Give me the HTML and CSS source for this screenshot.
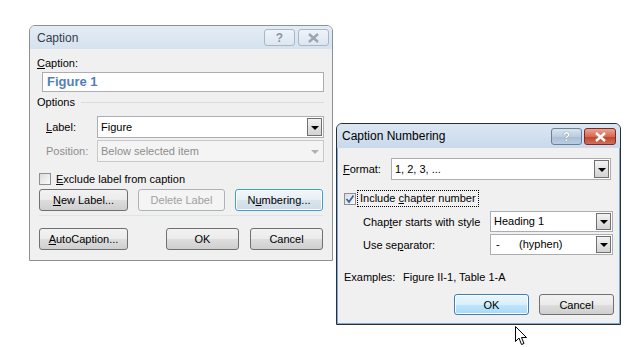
FILE: index.html
```html
<!DOCTYPE html>
<html lang="en">
<head>
    <meta charset="UTF-8">
    <title>Caption</title>
    <link rel="stylesheet" href="styles.css">
</head>
<body>
    <div class="dialog dlg-caption">
        <div class="titlebar">
            <span class="title">Caption</span>
            <div class="caps">
                <span class="cap help">?</span>
                <span class="cap close">
                    <svg width="13" height="10" viewBox="0 0 13 10"><path d="M2 1 L11 9 M11 1 L2 9" stroke="#9aa6b4" stroke-width="2.4" fill="none"/></svg>
                </span>
            </div>
        </div>
        <div class="body">
            <div class="field-label"><u>C</u>aption:</div>
            <div class="textbox">Figure 1</div>
            <div class="group-head"><span>Options</span><span class="rule"></span></div>
            <div class="row first">
                <span class="lbl"><u>L</u>abel:</span>
                <div class="combo wide">Figure<span class="drop"></span></div>
            </div>
            <div class="row">
                <span class="lbl disabled">Position:</span>
                <div class="combo wide off">Below selected item<span class="drop"></span></div>
            </div>
            <div class="check-row">
                <span class="checkbox"></span>
                <span><u>E</u>xclude label from caption</span>
            </div>
            <div class="btn-row">
                <span class="btn b-new"><u>N</u>ew Label...</span>
                <span class="btn b-del off">Delete Label</span>
                <span class="btn b-num focus">N<u>u</u>mbering...</span>
            </div>
            <div class="sep"></div>
            <div class="btn-row bottom">
                <span class="btn b-new"><u>A</u>utoCaption...</span>
                <span class="btn b-ok">OK</span>
                <span class="btn b-cancel">Cancel</span>
            </div>
        </div>
    </div>

    <div class="dialog dlg-numbering active">
        <div class="titlebar">
            <span class="title">Caption Numbering</span>
            <div class="caps">
                <span class="cap help">?</span>
                <span class="cap close">
                    <svg width="13" height="10" viewBox="0 0 13 10"><path d="M2 1 L11 9 M11 1 L2 9" stroke="#ffffff" stroke-width="2.4" fill="none"/></svg>
                </span>
            </div>
        </div>
        <div class="body">
            <div class="row">
                <span class="lbl"><u>F</u>ormat:</span>
                <div class="combo fmt">1, 2, 3, ...<span class="drop"></span></div>
            </div>
            <div class="check-row">
                <span class="checkbox checked">
                    <svg width="10" height="10" viewBox="0 0 10 10"><path d="M1.5 5 L4 8 L8.5 1.5" stroke="#3a62b0" stroke-width="1.8" fill="none"/></svg>
                </span>
                <span class="focus-text">Include <u>c</u>hapter number</span>
            </div>
            <div class="row sub">
                <span class="lbl">Chap<u>t</u>er starts with style</span>
                <div class="combo style">Heading 1<span class="drop"></span></div>
            </div>
            <div class="row sub tight">
                <span class="lbl">Use se<u>p</u>arator:</span>
                <div class="combo style"><span class="dash">-</span>(hyphen)<span class="drop"></span></div>
            </div>
            <div class="examples"><span class="ex-lbl">Examples:</span>Figure II-1, Table 1-A</div>
            <div class="btn-row end">
                <span class="btn b-ok2 focus">OK</span>
                <span class="btn b-ok2">Cancel</span>
            </div>
        </div>
    </div>

    <svg class="cursor" width="13" height="20" viewBox="0 0 13 20">
        <path d="M0.5 0.5 L0.5 15.5 L4 12 L6.5 18.5 L9 17.5 L6.5 11.5 L11.5 11.5 Z" fill="#ffffff" stroke="#000000" stroke-width="1"/>
    </svg>
</body>
</html>
```
FILE: styles.css
```css
* {
    margin: 0;
    padding: 0;
    box-sizing: border-box;
}

body {
    width: 632px;
    height: 347px;
    background-color: #ffffff;
    font-family: 'Liberation Sans', Arial, sans-serif;
    font-size: 11px;
    color: #000000;
    position: relative;
    overflow: hidden;
}

u {
    text-decoration: underline;
    text-underline-offset: 1px;
}

/* windows */
.dialog {
    position: absolute;
    background-color: #f0f0f0;
    border: 1px solid #8c9196;
    border-radius: 6px 6px 0 0;
    overflow: hidden;
}

.dlg-caption {
    left: 29px;
    top: 25px;
    width: 304px;
    height: 236px;
}

.dlg-numbering {
    left: 336px;
    top: 123px;
    width: 285px;
    height: 202px;
    border-color: #2b2f33;
    box-shadow: inset 0 0 0 1px #7eaad6;
}

.titlebar {
    height: 23px;
    display: flex;
    align-items: center;
    justify-content: space-between;
    padding: 0 3px 0 7px;
    background: linear-gradient(#e4ecf5, #d6e2ef);
    font-size: 12px;
    color: #34404c;
}

.active .titlebar {
    height: 24px;
    padding: 0 4px 0 5px;
    background: linear-gradient(#dbe6f3, #c9d9eb);
    color: #000000;
}

.caps {
    display: flex;
    gap: 3px;
    align-self: flex-start;
    margin-top: 3px;
}

.active .caps {
    gap: 2px;
    margin-top: 4px;
}

.cap {
    width: 31px;
    height: 17px;
    display: flex;
    align-items: center;
    justify-content: center;
    border: 1px solid #aab6c4;
    border-radius: 3px;
    background: linear-gradient(#eef3f8, #dde6ef);
    font-weight: bold;
    font-size: 12px;
    color: #8995a3;
}

.active .cap.help {
    border-color: #6d7f94;
    background: linear-gradient(#d8e4f0 0%, #bccde0 50%, #a9bed6 51%, #b9cde2 100%);
    color: #ffffff;
    text-shadow: 0 0 1px #44566b;
}

.active .cap.close {
    width: 32px;
    border-color: #7d2a22;
    background: linear-gradient(#e9a594 0%, #d56a55 50%, #c2412b 51%, #d0705a 100%);
}

.body {
    padding: 7px 8px 0 7px;
}

/* Caption dialog */
.field-label {
    height: 14px;
    line-height: 14px;
}

.textbox {
    margin: 2px 0 0 5px;
    width: 282px;
    height: 20px;
    border: 1px solid #abadb3;
    background-color: #ffffff;
    padding-left: 4px;
    font-size: 13px;
    font-weight: bold;
    color: #4f81bd;
    line-height: 18px;
}

.group-head {
    display: flex;
    align-items: center;
    gap: 6px;
    height: 14px;
    margin-top: 3px;
}

.group-head .rule {
    flex: 1;
    height: 1px;
    background-color: #d5dfe5;
}

.row {
    display: flex;
    align-items: center;
    margin-top: 2px;
}

.row.first {
    margin-top: 7px;
}

.dlg-caption .lbl {
    width: 60px;
    padding-left: 9px;
}

.lbl.disabled {
    color: #8d8d8d;
}

.combo {
    position: relative;
    height: 22px;
    border: 1px solid #abadb3;
    background-color: #ffffff;
    padding-left: 3px;
    line-height: 20px;
    white-space: nowrap;
}

.combo.wide {
    width: 227px;
}

.combo.off {
    background-color: #f4f4f4;
    border-color: #c9c9c9;
    color: #8d8d8d;
}

.drop {
    position: absolute;
    right: 1px;
    top: 1px;
    bottom: 1px;
    width: 15px;
    border: 1px solid #707070;
    background: linear-gradient(#f3f3f3, #e2e2e2 50%, #d3d3d3);
}

.drop::after {
    content: "";
    position: absolute;
    left: 3px;
    top: 7px;
    border-left: 4px solid transparent;
    border-right: 4px solid transparent;
    border-top: 4px solid #000000;
}

.combo.off .drop {
    border-color: transparent;
    background: none;
}

.combo.off .drop::after {
    border-top-color: #b0b0b0;
}

.check-row {
    display: flex;
    align-items: center;
    gap: 5px;
    margin: 10px 0 0 2px;
    height: 13px;
}

.checkbox {
    width: 12px;
    height: 12px;
    border: 1px solid #8f8f8f;
    background: linear-gradient(135deg, #dcdcdc, #fafafa);
    display: flex;
    align-items: center;
    justify-content: center;
}

.btn-row {
    display: flex;
    margin-top: 4px;
    padding-left: 2px;
}

.btn {
    height: 22px;
    display: flex;
    align-items: center;
    justify-content: center;
    border: 1px solid #707070;
    border-radius: 3px;
    background: linear-gradient(#f2f2f2 0%, #ebebeb 50%, #dddddd 51%, #cfcfcf 100%);
}

.btn.off {
    border-color: #adb2b5;
    background: #f4f4f4;
    color: #a0a0a0;
}

.btn.focus {
    border-color: #3c7fb1;
    background: linear-gradient(#eaf6fd 0%, #d9f0fc 50%, #bee6fd 51%, #a7d9f5 100%);
    box-shadow: inset 0 0 0 1px #ffffff;
}

.b-new { width: 89px; }
.b-del { width: 87px; margin-left: 10px; }
.b-num { width: 88px; margin-left: 10px; }

.dlg-caption .btn.focus {
    background: linear-gradient(#f2f7fb 0%, #e6eff6 50%, #d8e5ef 51%, #cfdce6 100%);
    border-color: #3c9fd6;
}

.sep {
    height: 1px;
    margin: 4px 0 0 2px;
    width: 284px;
    background-color: #dfe4e8;
}

.btn-row.bottom {
    margin-top: 12px;
}

.b-ok { width: 73px; margin-left: 38px; }
.b-cancel { width: 73px; margin-left: 11px; }

/* Caption Numbering dialog */
.dlg-numbering .body {
    padding: 8px 0 0 6px;
}

.dlg-numbering .lbl {
    width: 48px;
}

.combo.fmt {
    width: 220px;
}

.dlg-numbering .check-row {
    margin: 12px 0 0 1px;
    gap: 3px;
}

.focus-text {
    outline: 1px dotted #000000;
    outline-offset: 1px;
    padding: 0 1px;
    line-height: 13px;
}

.row.sub {
    margin-top: 6px;
}

.row.sub.tight {
    margin-top: 2px;
}

.row.sub .lbl {
    width: 147px;
    padding-left: 20px;
}

.combo.style {
    width: 123px;
    height: 21px;
    line-height: 19px;
}

.combo.style .drop::after {
    top: 6px;
}

.dash {
    display: inline-block;
    width: 25px;
    padding-left: 2px;
}

.examples {
    margin: 15px 0 0 1px;
    height: 14px;
    line-height: 14px;
}

.ex-lbl {
    display: inline-block;
    width: 59px;
}

.btn-row.end {
    margin-top: 10px;
    padding-left: 111px;
    gap: 10px;
}

.b-ok2 {
    width: 75px;
    height: 21px;
}

.cursor {
    position: absolute;
    left: 515px;
    top: 326px;
}
```
